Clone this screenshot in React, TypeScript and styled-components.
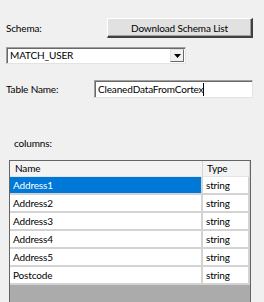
import React from "react";
import styled, { createGlobalStyle } from "styled-components";

const Global = createGlobalStyle`
  html, body { margin: 0; padding: 0; background: #f0f0f0; }
  body { font-family: Lato, "Noto Sans", sans-serif; font-size: 10px; letter-spacing: -0.15px; color: #000; }
  #root { width: 264px; height: 302px; overflow: hidden; }
`;

const Page = styled.div`
  display: flex;
  flex-direction: column;
  width: 264px;
  height: 302px;
  box-sizing: border-box;
  padding-top: 18px;
`;

const Row = styled.div<{ $mt?: number; $pl?: number }>`
  display: flex;
  align-items: center;
  margin-top: ${(p) => p.$mt ?? 0}px;
  padding-left: ${(p) => p.$pl ?? 6}px;
`;

const Label = styled.div<{ $w: number }>`
  width: ${(p) => p.$w}px;
  line-height: 14px;
`;

const Button = styled.div`
  box-sizing: border-box;
  width: 146px;
  height: 20px;
  display: flex;
  align-items: center;
  justify-content: center;
  background: #e1e1e1;
  border-top: 1px solid #ffffff;
  border-left: 1px solid #ffffff;
  border-right: 2px solid #404040;
  border-bottom: 2px solid #404040;
  box-shadow: inset -1px -1px 0 #a0a0a0;
  color: #000;
`;

const Combo = styled.div`
  box-sizing: border-box;
  width: 180px;
  height: 17px;
  display: flex;
  background: #fff;
  border-top: 1px solid #a0a0a0;
  border-left: 1px solid #a0a0a0;
  border-right: 1px solid #e3e3e3;
  border-bottom: 1px solid #e3e3e3;
  box-shadow: inset 1px 1px 0 #696969;
`;

const ComboText = styled.div`
  flex: 1;
  padding-left: 3px;
  line-height: 14px;
`;

const ComboArrow = styled.div`
  box-sizing: border-box;
  width: 14px;
  height: 13px;
  margin: 1px 1px 1px 0;
  background: #f0f0f0;
  border-top: 1px solid #e3e3e3;
  border-left: 1px solid #e3e3e3;
  border-right: 1px solid #696969;
  border-bottom: 1px solid #696969;
  display: flex;
  align-items: center;
  justify-content: center;
`;

const Input = styled.div`
  box-sizing: border-box;
  width: 159px;
  height: 18px;
  background: #fff;
  border-top: 1px solid #a0a0a0;
  border-left: 1px solid #a0a0a0;
  border-right: 1px solid #e3e3e3;
  border-bottom: 1px solid #e3e3e3;
  box-shadow: inset 1px 1px 0 #696969;
  padding-left: 3px;
  display: flex;
  align-items: center;
`;

const Caret = styled.span`
  display: inline-block;
  width: 1px;
  height: 13px;
  background: #000;
`;

const Table = styled.div`
  box-sizing: border-box;
  margin-left: 9px;
  margin-top: 10px;
  width: 242px;
  flex: 1;
  border: 1px solid #646464;
  border-bottom: none;
  background: #ababab;
  display: flex;
  flex-direction: column;
`;

const Grid = styled.div`
  display: grid;
  grid-template-columns: 193px 47px;
`;

const HeadCell = styled.div<{ $pl: number }>`
  box-sizing: border-box;
  height: 16px;
  background: #f3f3f3;
  border-right: 1px solid #d5d5d5;
  border-bottom: 1px solid #e5e5e5;
  padding-left: ${(p) => p.$pl}px;
  line-height: 15px;
`;

const Cell = styled.div<{ $sel?: boolean; $pl: number }>`
  box-sizing: border-box;
  height: 18px;
  background: ${(p) => (p.$sel ? "#0078d7" : "#ffffff")};
  color: ${(p) => (p.$sel ? "#ffffff" : "#000000")};
  border-right: 2px solid #d3d3d3;
  border-bottom: 2px solid #d3d3d3;
  padding-left: ${(p) => p.$pl}px;
  line-height: 16px;
`;

const rows = ["Address1", "Address2", "Address3", "Address4", "Address5", "Postcode"];

export default function App() {
  return (
    <>
      <Global />
      <Page>
        <Row>
          <Label $w={101}>Schema:</Label>
          <Button>Download Schema List</Button>
        </Row>
        <Row $mt={9}>
          <Combo>
            <ComboText>MATCH_USER</ComboText>
            <ComboArrow>
              <svg width="7" height="4" viewBox="0 0 7 4">
                <polygon points="0,0 7,0 3.5,4" fill="#000" />
              </svg>
            </ComboArrow>
          </Combo>
        </Row>
        <Row $mt={16}>
          <Label $w={88}>Table Name:</Label>
          <Input>
            CleanedDataFromCortex
            <Caret />
          </Input>
        </Row>
        <Row $mt={38} $pl={14}>
          <Label $w={100}>columns:</Label>
        </Row>
        <Table>
          <Grid>
            <HeadCell $pl={5}>Name</HeadCell>
            <HeadCell $pl={4}>Type</HeadCell>
            {rows.map((r, i) => (
              <React.Fragment key={r}>
                <Cell $sel={i === 0} $pl={3}>{r}</Cell>
                <Cell $pl={3}>string</Cell>
              </React.Fragment>
            ))}
          </Grid>
        </Table>
      </Page>
    </>
  );
}
